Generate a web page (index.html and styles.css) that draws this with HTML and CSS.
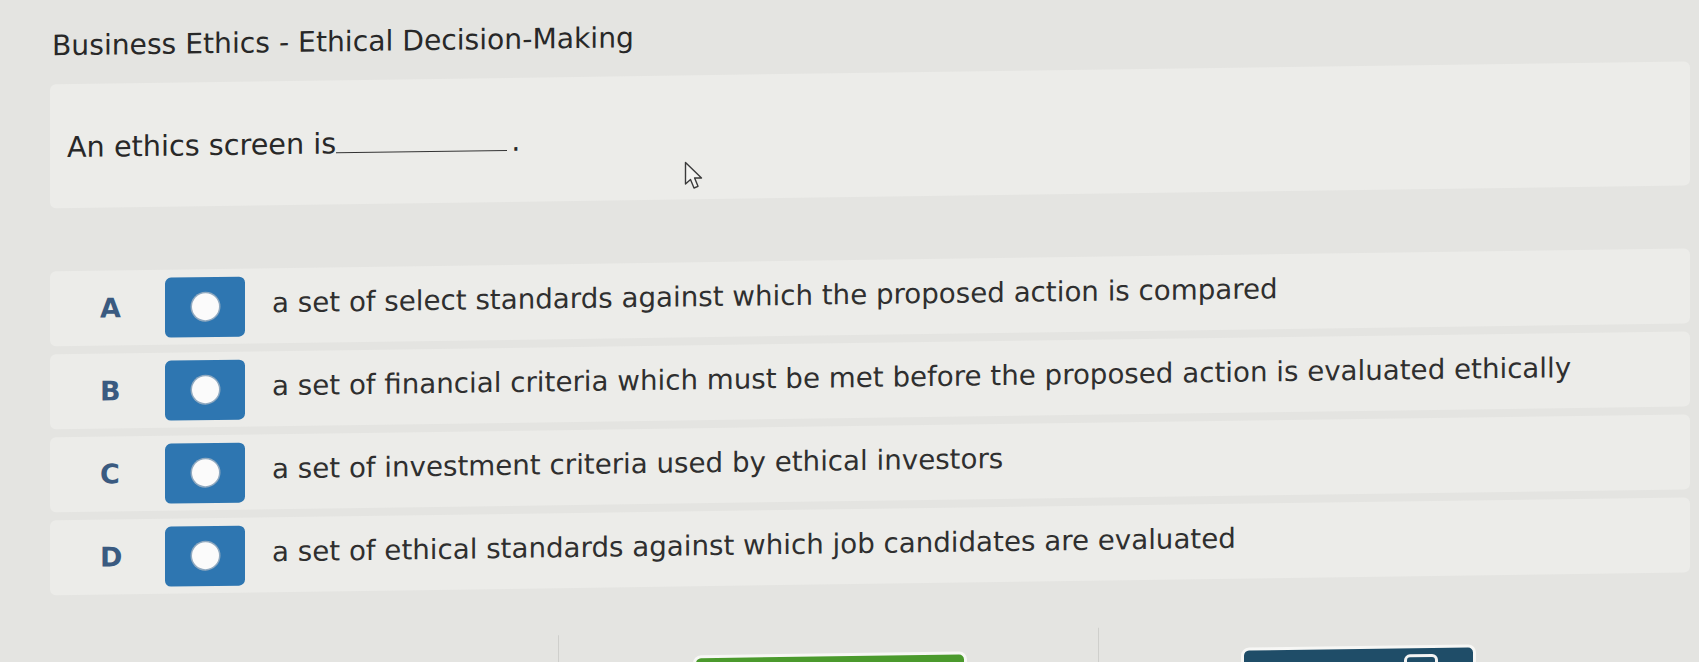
FILE: index.html
```html
<!DOCTYPE html>
<html lang="en">
<head>
<meta charset="utf-8">
<title>Business Ethics - Ethical Decision-Making</title>
<link rel="stylesheet" href="styles.css">
</head>
<body>
<div class="page">
  <h1 class="title">Business Ethics - Ethical Decision-Making</h1>
  <div class="question">
    <p class="prompt">An ethics screen is<span class="blank"></span>.</p>
  </div>
  <div class="options">
    <div class="option">
      <span class="letter">A</span>
      <span class="radio"><span class="dot"></span></span>
      <span class="text">a set of select standards against which the proposed action is compared</span>
    </div>
    <div class="option">
      <span class="letter">B</span>
      <span class="radio"><span class="dot"></span></span>
      <span class="text">a set of financial criteria which must be met before the proposed action is evaluated ethically</span>
    </div>
    <div class="option">
      <span class="letter">C</span>
      <span class="radio"><span class="dot"></span></span>
      <span class="text">a set of investment criteria used by ethical investors</span>
    </div>
    <div class="option">
      <span class="letter">D</span>
      <span class="radio"><span class="dot"></span></span>
      <span class="text">a set of ethical standards against which job candidates are evaluated</span>
    </div>
  </div>
  <div class="actions">
    <span class="divider divider-left"></span>
    <span class="btn btn-green"></span>
    <span class="divider divider-mid"></span>
    <span class="btn btn-blue"><span class="btn-icon"></span></span>
  </div>
</div>
<svg class="cursor" width="22" height="30" viewBox="0 0 22 30" aria-hidden="true">
  <path d="M1.5 1.5 L1.5 23 L6.5 18.5 L10 27 L14 25.3 L10.6 17 L17.5 17 Z" fill="#f4f4f2" stroke="#3a3a3a" stroke-width="1.4" stroke-linejoin="round"/>
</svg>
</body>
</html>
```

FILE: styles.css
```css
html, body {
  margin: 0;
  padding: 0;
}
body {
  background: #e4e4e1;
  height: 662px;
  overflow: hidden;
  position: relative;
  font-family: "DejaVu Sans", Verdana, sans-serif;
  color: #2b2b2b;
}
.page {
  padding: 29px 9px 0 50px;
  transform: skewY(-0.8deg);
  transform-origin: 0 0;
}
.title {
  margin: 0 0 0 2px;
  font-family: "DejaVu Sans", Verdana, sans-serif;
  font-weight: normal;
  font-size: 28.2px;
  line-height: 35px;
  color: #282828;
}
.question {
  margin-top: 21px;
  height: 124px;
  box-sizing: border-box;
  padding: 46px 0 0 17px;
  background: #ecece9;
  border-radius: 6px;
}
.prompt {
  margin: 0;
  font-family: "DejaVu Sans", Verdana, sans-serif;
  font-size: 28.7px;
  line-height: 34px;
  color: #282828;
}
.blank {
  display: inline-block;
  width: 171px;
  border-bottom: 1.5px solid #333;
  vertical-align: baseline;
  margin-right: 4px;
}
.options {
  margin-top: 63px;
  display: flex;
  flex-direction: column;
  gap: 8px;
}
.option {
  height: 75px;
  display: flex;
  align-items: center;
  padding-left: 50px;
  background: #ecece9;
  border-radius: 6px;
}
.letter {
  width: 65px;
  font-weight: bold;
  font-size: 27px;
  color: #3a5a80;
}
.radio {
  width: 80px;
  height: 60px;
  border-radius: 6px;
  background: #2e76b1;
  display: flex;
  align-items: center;
  justify-content: center;
  margin-right: 27px;
  flex: none;
}
.dot {
  width: 27px;
  height: 27px;
  border-radius: 50%;
  background: #fbfbfb;
  box-shadow: 0 0 0 1.5px #8fa9c0;
}
.text {
  font-size: 27.7px;
  line-height: 34px;
  color: #2f2f2f;
  margin-top: -6px;
}
.actions {
  margin-top: 69px;
  display: flex;
  align-items: flex-start;
  padding-left: 508px;
}
.divider {
  display: block;
  width: 1px;
  height: 60px;
  margin-top: -22px;
  background: #cfcfcc;
}
.divider-left {
  margin-right: 134px;
}
.divider-mid {
  margin-left: 131px;
  margin-right: 142px;
}
.btn {
  display: block;
  height: 44px;
  border-radius: 8px;
  border: 3px solid #f7f7f5;
}
.btn-green {
  width: 268px;
  background: #4b9a2d;
}
.btn-blue {
  width: 229px;
  background: #1f4d68;
  position: relative;
}
.btn-icon {
  position: absolute;
  left: 160px;
  top: 6px;
  width: 34px;
  height: 30px;
  border: 3px solid #f4f4f4;
  border-radius: 6px;
  box-sizing: border-box;
}
.cursor {
  position: absolute;
  left: 684px;
  top: 161px;
}
```
